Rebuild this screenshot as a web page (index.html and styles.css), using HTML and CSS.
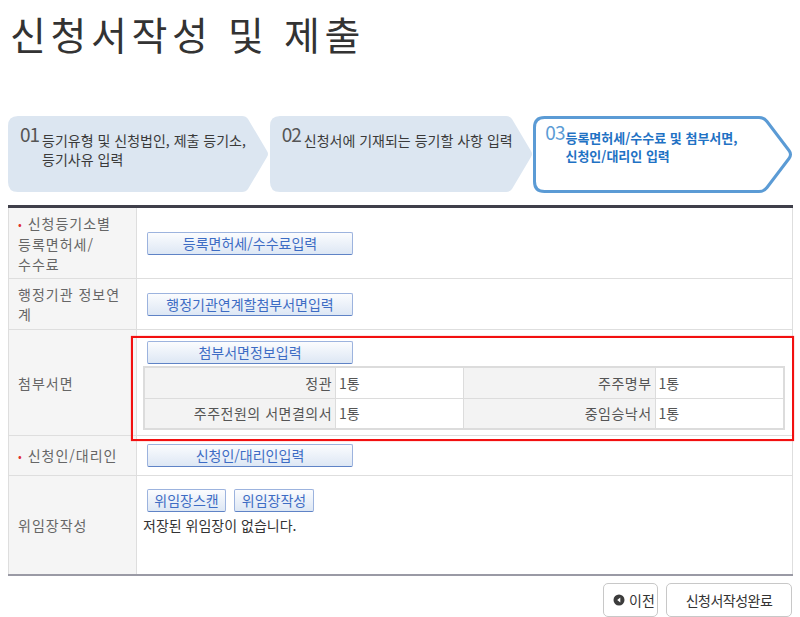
FILE: index.html
```html
<!DOCTYPE html>
<html lang="ko">
<head>
    <meta charset="UTF-8">
    <title>신청서작성 및 제출</title>
    <link rel="stylesheet" href="styles.css">
</head>
<body>
    <h1 class="page-title">신청서작성 및 제출</h1>

    <div class="steps">
        <div class="step">
            <svg class="step-bg" width="260" height="76" viewBox="0 0 260 76">
                <path d="M10,0 H234 Q238,0 240,3 L259,35 Q261,38 259,41 L240,73 Q238,76 234,76 H10 Q0,76 0,66 V10 Q0,0 10,0 Z" fill="#dce6f1"/>
            </svg>
            <span class="step-num">01</span>
            <span class="step-text">등기유형 및 신청법인, 제출 등기소,<br>등기사유 입력</span>
        </div>
        <div class="step">
            <svg class="step-bg" width="262" height="76" viewBox="0 0 262 76">
                <path d="M10,0 H236 Q240,0 242,3 L261,35 Q263,38 261,41 L242,73 Q240,76 236,76 H10 Q0,76 0,66 V10 Q0,0 10,0 Z" fill="#dce6f1"/>
            </svg>
            <span class="step-num">02</span>
            <span class="step-text">신청서에 기재되는 등기할 사항 입력</span>
        </div>
        <div class="step step-active">
            <svg class="step-bg" width="260" height="77" viewBox="0 0 260 77">
                <path d="M11.5,1.5 H226 Q231,1.5 234,5.5 L256,34.5 Q259,38.5 256,42.5 L234,71.5 Q231,75.5 226,75.5 H11.5 Q1.5,75.5 1.5,65.5 V11.5 Q1.5,1.5 11.5,1.5 Z" fill="#fff" stroke="#5b9bd5" stroke-width="3"/>
            </svg>
            <span class="step-num">03</span>
            <span class="step-text">등록면허세/수수료 및 첨부서면,<br>신청인/대리인 입력</span>
        </div>
    </div>

    <table class="form-table">
        <tr class="row-fee">
            <th><span class="req">&#8226;</span> 신청등기소별<br>등록면허세/<br>수수료</th>
            <td><button class="blue-btn wide">등록면허세/수수료입력</button></td>
        </tr>
        <tr class="row-agency">
            <th>행정기관 정보연<br>계</th>
            <td><button class="blue-btn wide">행정기관연계할첨부서면입력</button></td>
        </tr>
        <tr class="row-attach">
            <th>첨부서면</th>
            <td class="attach-cell">
                <button class="blue-btn wide">첨부서면정보입력</button>
                <table class="doc-table">
                    <tr>
                        <th>정관</th>
                        <td>1통</td>
                        <th>주주명부</th>
                        <td>1통</td>
                    </tr>
                    <tr>
                        <th>주주전원의 서면결의서</th>
                        <td>1통</td>
                        <th>중임승낙서</th>
                        <td>1통</td>
                    </tr>
                </table>
                <div class="highlight"></div>
            </td>
        </tr>
        <tr class="row-applicant">
            <th><span class="req">&#8226;</span> 신청인/대리인</th>
            <td><button class="blue-btn wide">신청인/대리인입력</button></td>
        </tr>
        <tr class="row-proxy">
            <th>위임장작성</th>
            <td>
                <div class="btn-row">
                    <button class="blue-btn">위임장스캔</button>
                    <button class="blue-btn">위임장작성</button>
                </div>
                <p class="empty-msg">저장된 위임장이 없습니다.</p>
            </td>
        </tr>
    </table>

    <div class="bottom-btns">
        <button class="plain-btn prev-btn">
            <svg width="12" height="12" viewBox="0 0 12 12">
                <circle cx="6" cy="6" r="5.5" fill="#3c3c3c"/>
                <path d="M7.3,3.4 L4.2,6 L7.3,8.6 Z" fill="#fff"/>
            </svg>
            이전
        </button>
        <button class="plain-btn done-btn">신청서작성완료</button>
    </div>
</body>
</html>
```

FILE: styles.css
```css
body {
    margin: 0;
    padding: 0 7px 0 8px;
    background: #fff;
    font-family: "Noto Sans CJK KR", "Noto Sans", sans-serif;
    color: #555;
}
.page-title {
    margin: 0;
    padding: 10px 0 0 2px;
    height: 46px;
    font-size: 39px;
    font-weight: normal;
    line-height: 46px;
    letter-spacing: 4.6px;
    color: #333;
}
.steps {
    display: flex;
    margin-top: 60px;
    height: 77px;
}
.step {
    position: relative;
    width: 260px;
    height: 76px;
    display: flex;
    align-items: flex-start;
    padding: 7px 0 0 12px;
    box-sizing: border-box;
}
.step + .step {
    margin-left: 2px;
}
.step:nth-child(2) {
    width: 262px;
}
.step-bg {
    position: absolute;
    left: 0;
    top: 0;
}
.step-num,
.step-text {
    position: relative;
}
.step-num {
    font-size: 19px;
    line-height: 22px;
    color: #555;
    letter-spacing: -1px;
    margin-right: 3px;
}
.step-text {
    padding-top: 8px;
    font-size: 14px;
    line-height: 19px;
    color: #3a3a3a;
}
.step-active {
    padding-top: 5px;
}
.step-active .step-num {
    color: #5b9bd5;
    margin-right: 1px;
}
.step-active .step-text {
    font-size: 13px;
    line-height: 18px;
    font-weight: bold;
    color: #1f72c4;
}
.form-table {
    width: 785px;
    margin-top: 12px;
    border-collapse: collapse;
    border-top: 3px solid #3f3f4a;
    border-bottom: 2px solid #9a9aa5;
}
.form-table > tbody > tr > th,
.form-table > tbody > tr > td {
    border: 1px solid #dedede;
    padding: 0 6px;
    vertical-align: middle;
}
.form-table > tbody > tr > th {
    width: 112px;
    background: #f5f5f5;
    text-align: left;
    font-weight: normal;
    font-size: 14px;
    line-height: 20px;
    letter-spacing: 1px;
    color: #666;
    padding-left: 9px;
}
.form-table > tbody > tr:first-child > * {
    border-top: none;
}
.form-table > tbody > tr:last-child > * {
    border-bottom: none;
}
.row-fee { height: 72px; }
.row-agency { height: 51px; }
.row-attach { height: 106px; }
.row-applicant { height: 40px; }
.row-proxy { height: 99px; }
.req {
    color: #e03030;
    font-size: 11px;
}
.blue-btn {
    height: 23px;
    padding: 0 8px;
    margin-left: 4px;
    font-family: inherit;
    font-size: 14px;
    line-height: 19px;
    color: #3d6cc4;
    background: linear-gradient(#fbfcfe, #dde7f4);
    border: 1px solid #9cb3de;
    border-bottom-color: #5f83c6;
    border-radius: 2px;
    cursor: pointer;
}
.blue-btn.wide {
    width: 206px;
    display: block;
}
.form-table > tbody > tr > td.attach-cell {
    position: relative;
    vertical-align: top;
    padding-top: 11px;
    padding-bottom: 5px;
}
.attach-cell .blue-btn {
    margin-bottom: 2px;
}
.doc-table {
    width: 642px;
    border-collapse: collapse;
    border: 2px solid #dcdcdc;
    font-size: 14px;
}
.doc-table tr {
    height: 31px;
}
.doc-table th,
.doc-table td {
    border: 1px solid #dcdcdc;
    padding: 0 3px;
    font-weight: normal;
    color: #555;
}
.doc-table th {
    background: #f3f3f3;
    text-align: right;
    width: 185px;
    letter-spacing: 0.5px;
}
.doc-table td {
    text-align: left;
    width: 122px;
}
.highlight {
    position: absolute;
    left: -6px;
    top: 6px;
    right: -2px;
    bottom: -6px;
    border: 2px solid #f21010;
    box-shadow: 0 0 1px #ff6060;
    pointer-events: none;
}
.btn-row {
    display: flex;
    gap: 8px;
}
.btn-row .blue-btn {
    width: 79px;
    padding: 0;
}
.btn-row .blue-btn + .blue-btn {
    margin-left: 0;
    width: 80px;
}
.empty-msg {
    margin: 4px 0 26px 0;
    font-size: 14px;
    line-height: 18px;
    color: #333;
}
.bottom-btns {
    display: flex;
    justify-content: flex-end;
    gap: 8px;
    margin-top: 7px;
    padding-right: 1px;
}
.plain-btn {
    height: 34px;
    background: #fff;
    border: 1px solid #c8c8c8;
    border-radius: 5px;
    font-family: inherit;
    font-size: 14px;
    color: #333;
    cursor: pointer;
}
.prev-btn {
    width: 55px;
    display: flex;
    align-items: center;
    gap: 4px;
    padding: 0 0 0 9px;
}
.done-btn {
    width: 126px;
    letter-spacing: -0.5px;
}
```
